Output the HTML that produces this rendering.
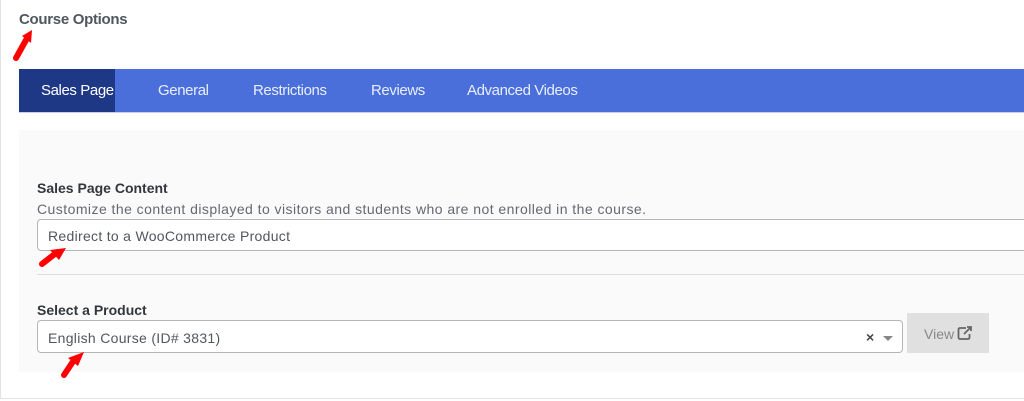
<!DOCTYPE html>
<html><head><style>
body{margin:0;width:1024px;height:401px;background:#fff;font-family:"Liberation Sans",sans-serif;position:relative;overflow:hidden}
.abs{position:absolute}
</style></head><body>
<div class="abs" style="left:0;top:0;width:1px;height:399px;background:#e2e2e2"></div>
<div class="abs" style="left:0;top:398px;width:1024px;height:1px;background:#e2e2e2"></div>
<div class="abs" style="left:19px;top:11px;font-size:15px;font-weight:bold;color:#50575e;letter-spacing:-0.3px">Course Options</div>
<div class="abs" style="left:19px;top:69px;width:1005px;height:43px;background:#4a6fda;border-bottom:1px solid #c8d0e8"></div>
<div class="abs" style="left:19px;top:69px;width:96px;height:43px;background:#1e3886"></div>
<div class="abs" style="top:82px;font-size:15px;color:#fff;left:41px;letter-spacing:-0.4px">Sales Page</div>
<div class="abs" style="top:82px;font-size:15px;color:#e8eefc;left:158px;letter-spacing:-0.4px">General</div>
<div class="abs" style="top:82px;font-size:15px;color:#e8eefc;left:253px;letter-spacing:-0.4px">Restrictions</div>
<div class="abs" style="top:82px;font-size:15px;color:#e8eefc;left:371px;letter-spacing:-0.4px">Reviews</div>
<div class="abs" style="top:82px;font-size:15px;color:#e8eefc;left:467px;letter-spacing:-0.4px">Advanced Videos</div>
<div class="abs" style="left:19px;top:130px;width:1005px;height:242px;background:#fafafa"></div>
<div class="abs" style="left:37px;top:180px;font-size:14px;font-weight:bold;color:#32373c">Sales Page Content</div>
<div class="abs" style="left:37px;top:201px;font-size:14px;color:#646970;letter-spacing:0.45px">Customize the content displayed to visitors and students who are not enrolled in the course.</div>
<div class="abs" style="left:37px;top:219px;width:1000px;height:30px;background:#fff;border:1px solid #b5b5b5;border-radius:4px"></div>
<div class="abs" style="left:48px;top:228px;font-size:14px;color:#50575e;letter-spacing:0.3px">Redirect to a WooCommerce Product</div>
<div class="abs" style="left:37px;top:274px;width:987px;height:1px;background:#dcdcdc"></div>
<div class="abs" style="left:37px;top:302px;font-size:14px;font-weight:bold;color:#32373c">Select a Product</div>
<div class="abs" style="left:37px;top:320px;width:864px;height:31px;background:#fff;border:1px solid #b5b5b5;border-radius:4px"></div>
<div class="abs" style="left:48px;top:330px;font-size:14px;color:#50575e;letter-spacing:0.3px">English Course (ID# 3831)</div>
<div class="abs" style="left:866px;top:329px;font-size:14px;font-weight:bold;color:#444">×</div>
<div class="abs" style="left:883px;top:336px;width:0;height:0;border-left:5px solid transparent;border-right:5px solid transparent;border-top:5px solid #888"></div>
<div class="abs" style="left:907px;top:313px;width:82px;height:40px;background:#e0e0e0"></div>
<div class="abs" style="left:924px;top:326px;font-size:14px;color:#888">View</div>
<svg class="abs" style="left:957px;top:326px" width="16" height="14" viewBox="0 0 16 14"><path d="M9 2H3a1.5 1.5 0 0 0-1.5 1.5v8A1.5 1.5 0 0 0 3 13h8a1.5 1.5 0 0 0 1.5-1.5V8" fill="none" stroke="#666" stroke-width="1.8"/><path d="M7 8L14 1M10 1h4v4" fill="none" stroke="#666" stroke-width="1.8"/></svg>
<svg class="abs" style="left:0;top:0" width="200" height="401">
<g stroke="#f00" stroke-width="6" stroke-linecap="round" fill="none">
<path d="M16 58 L26 40"/><path d="M42 264 L56 253"/><path d="M64 375 L74 360"/>
</g>
<g fill="#f00">
<path d="M22 36 L32 30 L31 43 Z"/>
<path d="M50 250 L66 248 L59 260 Z"/>
<path d="M68 358 L84 352 L78 366 Z"/>
</g></svg>
</body></html>
